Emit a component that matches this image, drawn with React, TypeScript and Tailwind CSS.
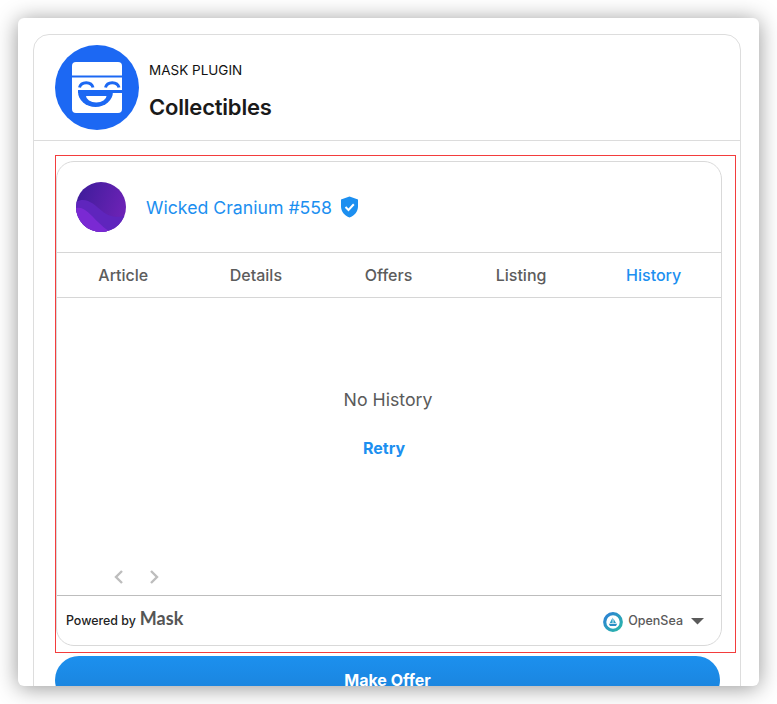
import React from "react";

function MaskLogo() {
  return (
    <svg width="84" height="85" viewBox="0 0 84 85" className="shrink-0 block">
      <ellipse cx="42" cy="42.500" rx="42" ry="42.500" fill="#1c68f3" />
      <path d="M17 30.500V21a4 4 0 0 1 4-4h42a4 4 0 0 1 4 4v9.500z" fill="#fff" />
      <path d="M17 32.500h50V64a4 4 0 0 1-4 4H21a4 4 0 0 1-4-4z" fill="#fff" />
      <path d="M23 46.500H67" stroke="#1c68f3" strokeWidth="3" fill="none" />
      <path d="M23 46.500h35a17.500 15.500 0 0 1-35 0z" fill="#1c68f3" />
      <path d="M31 51h20.500a10.250 6.500 0 0 1-20.500 0z" fill="#fff" />
      <path d="M24.500 42.500c1.500-6.500 12-6.500 13.500 0M50.500 42.500c1.500-6.500 12-6.500 13.500 0" fill="none" stroke="#1c68f3" strokeWidth="3" />
    </svg>
  );
}

function Avatar() {
  return (
    <svg width="50" height="50" viewBox="0 0 50 50" className="shrink-0 block">
      <defs>
        <linearGradient id="av" x1="0" y1="0" x2="1" y2="0.4">
          <stop offset="0" stopColor="#3a1c98" />
          <stop offset="1" stopColor="#6b22b5" />
        </linearGradient>
        <clipPath id="avc"><circle cx="25" cy="25" r="25" /></clipPath>
      </defs>
      <g clipPath="url(#avc)">
        <rect width="50" height="50" fill="url(#av)" />
        <path d="M0 20C10 14 18 22 26 29C34 36 42 35 50 34V50H0Z" fill="#5f25bd" />
        <path d="M0 26C8 24 14 32 22 40C26 44 30 47 34 50H0Z" fill="#7a29d3" />
      </g>
    </svg>
  );
}

function Shield() {
  return (
    <svg width="19" height="22" viewBox="0 0 18 22" className="block">
      <path d="M9 0.500L17.500 3.500V10.500C17.500 15.500 14 19.500 9 21.500C4 19.500 0.500 15.500 0.500 10.500V3.500Z" fill="#1c8ff0" />
      <path d="M5 11L8 14L13.300 8.300" fill="none" stroke="#fff" strokeWidth="2" />
    </svg>
  );
}

function OpenSeaIcon() {
  return (
    <svg width="20" height="20" viewBox="0 0 20 20" className="block">
      <defs>
        <linearGradient id="os" x1="0" y1="0" x2="1" y2="1">
          <stop offset="0" stopColor="#2c7fd6" />
          <stop offset="1" stopColor="#2ab8a8" />
        </linearGradient>
      </defs>
      <circle cx="10" cy="10" r="8.300" fill="#fff" stroke="url(#os)" strokeWidth="3.200" />
      <path d="M9.600 5.500V11H6.800ZM10.400 6.500L13 11H10.400Z" fill="#2a9fc4" />
      <path d="M5.800 11.800H14.200L13 14H7Z" fill="#2a8fc4" />
    </svg>
  );
}

const tabs = ["Article", "Details", "Offers", "Listing", "History"];

export default function App() {
  return (
    <div className="w-[777px] h-[704px] bg-white pt-[18px] pl-[18px] overflow-hidden" style={{ fontFamily: "Inter, sans-serif" }}>
      <div className="w-[741px] h-[668px] rounded-md bg-white overflow-hidden shadow-[0_2px_22px_rgba(0,0,0,0.42)] pt-4 pl-[15px]">
        <div className="w-[708px] h-[700px] rounded-2xl border border-[#dddddd]">
          <div className="h-[106px] flex items-center gap-[10px] pl-[21px] border-b border-[#dcdcdc]">
            <MaskLogo />
            <div className="flex flex-col mt-[6px]">
              <div className="text-[13.500px] leading-4 text-[#111111]">MASK PLUGIN</div>
              <div className="text-[22px] leading-6 font-semibold text-[#1a1a1a] mt-[17px] tracking-[-0.2px]">Collectibles</div>
            </div>
          </div>
          <div className="ml-[21px] mt-[14px] w-[681px] h-[498px] border border-[#f33d3d] pt-[5px]">
            <div className="w-[666px] h-[485px] rounded-[18px] border border-[#d9d9d9] flex flex-col">
              <div className="h-[90px] flex items-center pl-[19px]">
                <Avatar />
                <div className="ml-5 mt-[2px] text-[17.700px] text-[#1c8ff0]">Wicked Cranium #558</div>
                <div className="ml-2"><Shield /></div>
              </div>
              <div className="h-[46px] flex border-y border-[#d6d6d6] pr-[1px]">
                {tabs.map((t) => (
                  <div key={t} className={`flex-1 flex items-center justify-center text-[16px] font-medium ${t === "History" ? "text-[#1c8ff0]" : "text-[#5c5c5c]"}`}>{t}</div>
                ))}
              </div>
              <div className="flex-1 flex flex-col items-center relative">
                <div className="mt-[90px] mr-[2px] text-[17.700px] leading-6 text-[#5a5a5a]">No History</div>
                <div className="mt-[26px] mr-[10px] text-[16px] leading-5 font-bold text-[#1c8ff0]">Retry</div>
                <div className="mt-auto mb-[10px] self-start ml-[55px] flex gap-[23px]">
                  <svg width="13" height="16" viewBox="0 0 13 16" fill="none" stroke="#bdbdbd" strokeWidth="2.400"><path d="M10 2L4 8L10 14" /></svg>
                  <svg width="13" height="16" viewBox="0 0 13 16" fill="none" stroke="#bdbdbd" strokeWidth="2.400"><path d="M3 2L9 8L3 14" /></svg>
                </div>
              </div>
              <div className="h-[50px] border-t border-[#bdbdbd] flex items-center pl-[9px] pr-[17px] pt-[2px]">
                <span className="text-[12.400px] font-medium text-[#222222]">Powered by</span>
                <span className="ml-1 mb-[6px] text-[18px] font-bold text-[#555555]" style={{ fontFamily: "Lato, sans-serif" }}>Mask</span>
                <div className="ml-auto flex items-center">
                  <OpenSeaIcon />
                  <span className="ml-[5px] text-[12.500px] font-medium text-[#5a5a5a]">OpenSea</span>
                  <svg width="13" height="7" viewBox="0 0 13 7" className="ml-2"><path d="M0 0H13L6.500 6.500Z" fill="#5a5a5a" /></svg>
                </div>
              </div>
            </div>
          </div>
          <div className="ml-[21px] mt-[3px] w-[665px] h-[48px] rounded-[24px] bg-[linear-gradient(#1c90ee,#1a80d8)] flex items-center justify-center text-white text-[16px] font-bold">
            Make Offer
          </div>
        </div>
      </div>
    </div>
  );
}
